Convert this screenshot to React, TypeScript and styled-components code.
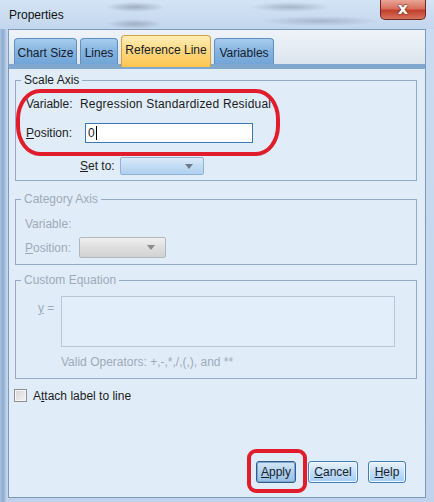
import * as React from 'react';
import styled, { createGlobalStyle } from 'styled-components';

const GlobalStyle = createGlobalStyle`
  html, body {
    margin: 0;
    padding: 0;
    width: 434px;
    height: 502px;
    overflow: hidden;
    background: #c4d8ee;
  }
  * {
    box-sizing: border-box;
  }
`;

const Window = styled.div`
  position: relative;
  width: 434px;
  height: 502px;
  display: flex;
  flex-direction: column;
  font-family: "Liberation Sans", Arial, sans-serif;
  font-size: 12px;
  color: #1c1c1c;
  background:
    linear-gradient(90deg, #a9c2de 0px, #8cabd0 3px, #c3d7ed 7px, transparent 9px),
    linear-gradient(#c9dcf1, #bfd4ec);
`;

const TitleBar = styled.div`
  height: 29px;
  flex: none;
  display: flex;
  align-items: flex-start;
  padding: 0 8px 0 9px;
  background:
    radial-gradient(ellipse 30px 5px at 135px 7px, rgba(70, 80, 100, 0.35), transparent),
    radial-gradient(ellipse 28px 5px at 135px 24px, rgba(70, 80, 100, 0.3), transparent),
    radial-gradient(ellipse 40px 5px at 290px 7px, rgba(70, 80, 100, 0.3), transparent),
    radial-gradient(ellipse 60px 5px at 320px 21px, rgba(70, 80, 100, 0.25), transparent),
    linear-gradient(#d4e4f5, #c2d6ee);
`;

const Title = styled.span`
  margin-top: 8px;
  line-height: 14px;
  color: #111;
`;

const CloseButton = styled.div`
  margin-left: auto;
  width: 46px;
  height: 20px;
  display: flex;
  align-items: center;
  justify-content: center;
  padding-bottom: 2px;
  border: 1px solid #6e2a22;
  border-top: none;
  border-radius: 0 0 5px 5px;
  background: linear-gradient(#e9a597 0%, #d9705e 45%, #c2402c 55%, #d7735e 100%);
  color: #fff;
  font-family: "DejaVu Sans", sans-serif;
  font-weight: bold;
  font-size: 16px;
  text-shadow: 0 0 2px #5a1a10, 0 0 1px #5a1a10;
`;

const Client = styled.div`
  flex: 1;
  margin: 0 8px 4px 8px;
  border: 1px solid #7d9ab8;
  display: flex;
  flex-direction: column;
  background: #e0edf9;
`;

const TabStrip = styled.div`
  height: 34px;
  flex: none;
  display: flex;
  align-items: flex-end;
  gap: 3px;
  padding-left: 5px;
  background: linear-gradient(#eef3f9, #dce5ef);
`;

const Tab = styled.div<{ $active?: boolean; $width: number }>`
  position: relative;
  z-index: 1;
  width: ${(p) => p.$width}px;
  height: ${(p) => (p.$active ? 32 : 26)}px;
  margin-bottom: ${(p) => (p.$active ? -3 : 0)}px;
  display: flex;
  align-items: center;
  justify-content: center;
  padding-top: ${(p) => (p.$active ? 0 : 2)}px;
  padding-bottom: ${(p) => (p.$active ? 3 : 0)}px;
  border: 1px solid ${(p) => (p.$active ? '#d6a23c' : '#5f8fbf')};
  border-bottom: none;
  border-radius: 4px 4px 0 0;
  background: ${(p) =>
    p.$active
      ? 'linear-gradient(#ffeeb8, #ffd77c 50%, #fcc552)'
      : 'linear-gradient(#a9cdee, #84b3e0 50%, #72a5d6)'};
  color: #14202c;
  white-space: nowrap;
`;

const BlueBar = styled.div`
  height: 5px;
  flex: none;
  background: #80a7cd;
`;

const Content = styled.div`
  flex: 1;
  display: flex;
  flex-direction: column;
  padding: 4px 8px 14px 5px;
`;

const Group = styled.fieldset<{ $top?: number }>`
  margin: ${(p) => p.$top ?? 0}px 0 0 1px;
  padding: 0;
  border: 1px solid #93abc4;
  min-width: 0;
`;

const Legend = styled.legend<{ $disabled?: boolean }>`
  margin-left: 5px;
  padding: 0 3px;
  line-height: 14px;
  color: ${(p) => (p.$disabled ? '#9eaab8' : '#1c1c1c')};
`;

const GroupBody = styled.div<{ $pt: number; $pb: number; $pl: number }>`
  display: flex;
  flex-direction: column;
  padding: ${(p) => p.$pt}px 0 ${(p) => p.$pb}px ${(p) => p.$pl}px;
`;

const Row = styled.div<{ $h: number; $mt?: number; $indent?: number }>`
  display: flex;
  align-items: center;
  height: ${(p) => p.$h}px;
  margin-top: ${(p) => p.$mt ?? 0}px;
  padding-left: ${(p) => p.$indent ?? 0}px;
`;

const Label = styled.span<{ $w?: number; $disabled?: boolean; $spacing?: number }>`
  flex: none;
  width: ${(p) => (p.$w ? `${p.$w}px` : 'auto')};
  white-space: nowrap;
  letter-spacing: ${(p) => p.$spacing ?? 0}px;
  color: ${(p) => (p.$disabled ? '#9eaab8' : '#1c1c1c')};
`;

const TextInput = styled.div`
  width: 168px;
  height: 20px;
  display: flex;
  align-items: center;
  padding-left: 2px;
  border: 1px solid #3a78b8;
  background: #fff;
`;

const Caret = styled.span`
  width: 1px;
  height: 14px;
  margin-left: 1px;
  background: #000;
`;

const Combo = styled.div<{ $w: number; $h: number; $disabled?: boolean }>`
  width: ${(p) => p.$w}px;
  height: ${(p) => p.$h}px;
  display: flex;
  align-items: center;
  justify-content: flex-end;
  padding-right: 10px;
  border: 1px solid ${(p) => (p.$disabled ? '#b2b8c0' : '#8fb2d6')};
  border-radius: 2px;
  background: ${(p) =>
    p.$disabled
      ? 'linear-gradient(#f0f0f0, #dedede 50%, #d2d2d2)'
      : 'linear-gradient(#dcebfa, #c2dcf4 50%, #b0d0f0)'};
`;

const Arrow = styled.span<{ $disabled?: boolean }>`
  width: 0;
  height: 0;
  border-left: 4px solid transparent;
  border-right: 4px solid transparent;
  border-top: 5px solid ${(p) => (p.$disabled ? '#8c8c8c' : '#6d7a88')};
`;

const EquationRow = styled.div`
  display: flex;
  align-items: flex-start;
  padding-left: 22px;
`;

const EquationLabel = styled.span`
  width: 23px;
  margin-top: 5px;
  line-height: 14px;
  color: #9eaab8;
`;

const EquationBox = styled.div`
  width: 334px;
  height: 51px;
  border: 1px solid #b9c7d6;
  background: #e2eefa;
`;

const Hint = styled.div`
  margin: 8px 0 0 45px;
  line-height: 14px;
  color: #9eaab8;
`;

const CheckRow = styled.label`
  display: flex;
  align-items: center;
  gap: 6px;
  margin-top: 10px;
  height: 13px;
`;

const CheckBox = styled.span`
  width: 13px;
  height: 13px;
  border: 1px solid #8e8f8f;
  background: linear-gradient(135deg, #d6d6d6, #f4f4f4);
  box-shadow: inset 0 0 0 1px #f6f6f6;
`;

const Spacer = styled.div`
  flex: 1;
`;

const ButtonRow = styled.div`
  display: flex;
  justify-content: flex-end;
  padding-right: 11px;
`;

const Button = styled.div<{ $w: number; $focused?: boolean; $gap?: number }>`
  width: ${(p) => p.$w}px;
  height: 22px;
  margin-left: ${(p) => p.$gap ?? 0}px;
  display: flex;
  align-items: center;
  justify-content: center;
  border: 1px solid ${(p) => (p.$focused ? '#2c5e92' : '#3f7fb8')};
  border-radius: 3px;
  background: ${(p) =>
    p.$focused
      ? 'linear-gradient(#d3e5f6, #b3d1ee 50%, #98bfe5)'
      : 'linear-gradient(#e8f3fd, #c4def7 50%, #a6cdf2)'};
  box-shadow: ${(p) => (p.$focused ? 'inset 0 0 0 1px #7fa6cc' : 'inset 0 0 0 1px #f2f8fe')};
  color: #15222e;
`;

const Highlight = styled.div<{ $x: number; $y: number; $w: number; $h: number; $r: string }>`
  position: absolute;
  left: ${(p) => p.$x}px;
  top: ${(p) => p.$y}px;
  width: ${(p) => p.$w}px;
  height: ${(p) => p.$h}px;
  border: 4px solid #e11d2b;
  border-radius: ${(p) => p.$r};
  pointer-events: none;
`;

const App: React.FC = () => (
  <Window>
    <GlobalStyle />
    <TitleBar>
      <Title>Properties</Title>
      <CloseButton>x</CloseButton>
    </TitleBar>
    <Client>
      <TabStrip>
        <Tab $width={63}>Chart Size</Tab>
        <Tab $width={38}>Lines</Tab>
        <Tab $width={90} $active>
          Reference Line
        </Tab>
        <Tab $width={60}>Variables</Tab>
      </TabStrip>
      <BlueBar />
      <Content>
        <Group>
          <Legend>Scale Axis</Legend>
          <GroupBody $pt={7} $pb={5} $pl={10}>
            <Row $h={20}>
              <Label $w={54}>Variable:</Label>
              <Label $spacing={0.2}>Regression Standardized Residual</Label>
            </Row>
            <Row $h={20} $mt={9}>
              <Label $w={59}>
                <u>P</u>osition:
              </Label>
              <TextInput>
                0<Caret />
              </TextInput>
            </Row>
            <Row $h={18} $mt={14} $indent={54}>
              <Label $w={40}>
                <u>S</u>et to:
              </Label>
              <Combo $w={84} $h={18}>
                <Arrow />
              </Combo>
            </Row>
          </GroupBody>
        </Group>

        <Group $top={11}>
          <Legend $disabled>Category Axis</Legend>
          <GroupBody $pt={8} $pb={6} $pl={9}>
            <Row $h={20}>
              <Label $disabled>Variable:</Label>
            </Row>
            <Row $h={21} $mt={3}>
              <Label $w={54} $disabled>
                <u>P</u>osition:
              </Label>
              <Combo $w={87} $h={21} $disabled>
                <Arrow $disabled />
              </Combo>
            </Row>
          </GroupBody>
        </Group>

        <Group $top={8}>
          <Legend $disabled>Custom Equation</Legend>
          <GroupBody $pt={9} $pb={9} $pl={0}>
            <EquationRow>
              <EquationLabel>
                <u>y</u> =
              </EquationLabel>
              <EquationBox />
            </EquationRow>
            <Hint>Valid Operators: +,-,*,/,(,), and **</Hint>
          </GroupBody>
        </Group>

        <CheckRow>
          <CheckBox />
          <Label>
            A<u>t</u>tach label to line
          </Label>
        </CheckRow>

        <Spacer />

        <ButtonRow>
          <Button $w={40} $focused>
            <u>A</u>pply
          </Button>
          <Button $w={50} $gap={12}>
            <u>C</u>ancel
          </Button>
          <Button $w={38} $gap={10}>
            <u>H</u>elp
          </Button>
        </ButtonRow>
      </Content>
    </Client>

    <Highlight $x={16} $y={89} $w={264} $h={67} $r="24px / 30px" />
    <Highlight $x={247} $y={449} $w={60} $h={44} $r="9px" />
  </Window>
);

export default App;
